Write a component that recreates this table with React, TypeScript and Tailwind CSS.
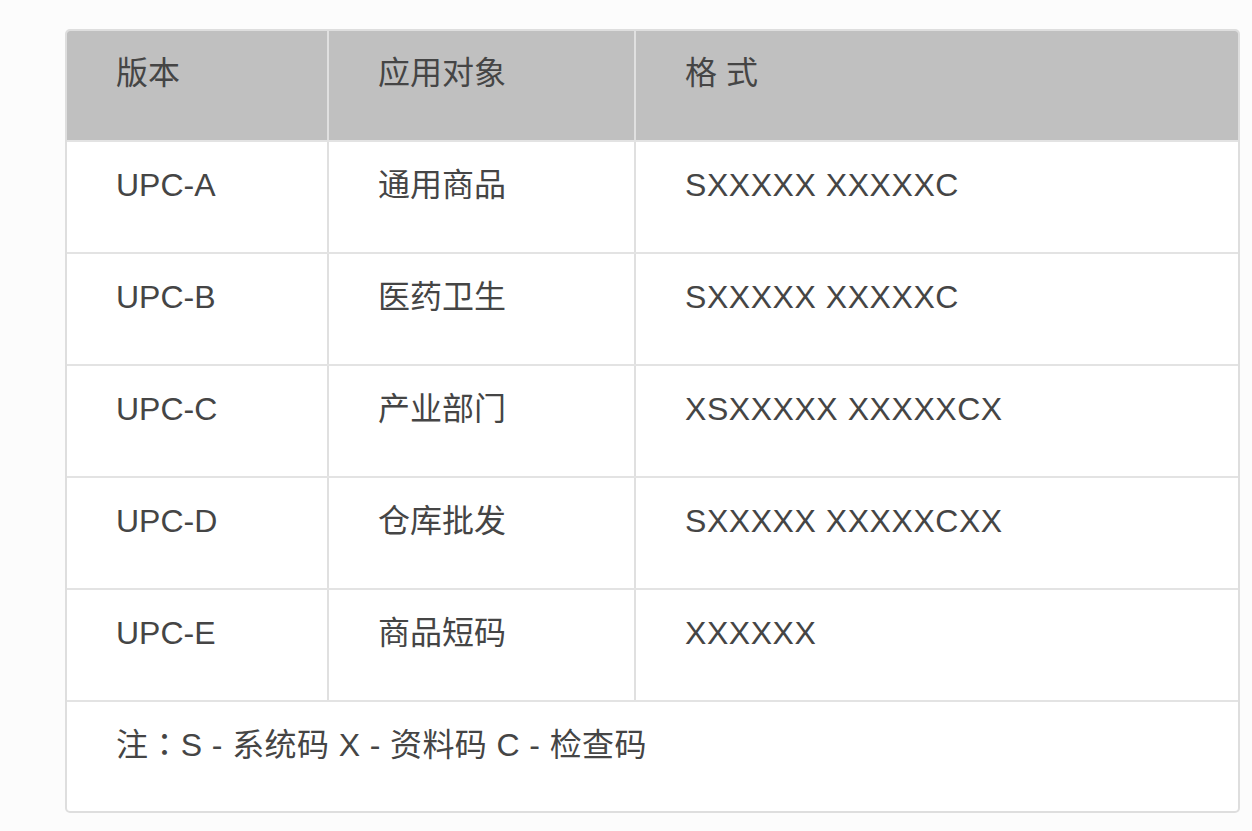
import React from "react";

const rows = [
  ["UPC-A", "通用商品", "SXXXXX XXXXXC"],
  ["UPC-B", "医药卫生", "SXXXXX XXXXXC"],
  ["UPC-C", "产业部门", "XSXXXXX XXXXXCX"],
  ["UPC-D", "仓库批发", "SXXXXX XXXXXCXX"],
  ["UPC-E", "商品短码", "XXXXXX"],
];

export default function App() {
  return (
    <div
      className="min-h-[831px] w-[1252px] bg-[#fcfcfc] pt-[29px] pl-[65px]"
      style={{ fontFamily: '"Liberation Sans", Arial, "Noto Sans CJK SC", sans-serif' }}
    >
      <div className="w-[1175px] overflow-hidden rounded-[5px] border-2 border-[#dedede] bg-white text-[32px] leading-[48px] text-[#454545]">
        <div className="grid h-[111px] grid-cols-[260px_2px_305px_2px_1fr] border-b-2 border-[#e3e3e3] bg-[#c0c0c0]">
          <div className="pl-[49px] pt-[18px]">版本</div>
          <div className="bg-[#e0e0e0]" />
          <div className="pl-[49px] pt-[18px]">应用对象</div>
          <div className="bg-[#e0e0e0]" />
          <div className="pl-[49px] pt-[18px]">格 式</div>
        </div>
        {rows.map((r) => (
          <div
            key={r[0]}
            className="grid h-[112px] grid-cols-[260px_2px_305px_2px_1fr] border-b-2 border-[#e3e3e3]"
          >
            <div className="pl-[49px] pt-[19px]">{r[0]}</div>
            <div className="bg-[#e0e0e0]" />
            <div className="pl-[49px] pt-[19px]">{r[1]}</div>
            <div className="bg-[#e0e0e0]" />
            <div className="pl-[49px] pt-[19px] tracking-[0.55px]">{r[2]}</div>
          </div>
        ))}
        <div className="h-[109px] pl-[49px] pt-[19px] tracking-[0.4px]">
          注
          <span className="leading-none" style={{ fontFamily: '"Noto Sans CJK JP", sans-serif' }}>：</span>
          S - 系统码 X - 资料码 C - 检查码
        </div>
      </div>
    </div>
  );
}
